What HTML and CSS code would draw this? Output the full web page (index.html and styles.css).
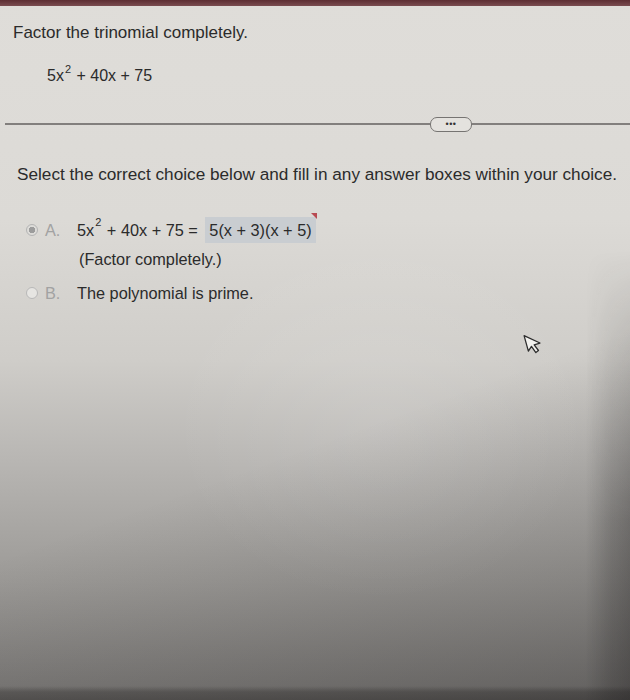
FILE: index.html
```
<!DOCTYPE html>
<html>
<head>
<meta charset="utf-8">
<link rel="stylesheet" href="styles.css">
</head>
<body>
<div class="screen">
  <div class="topband"></div>
  <div class="question">
    <p class="prompt">Factor the trinomial completely.</p>
    <p class="expr">5x<sup>2</sup> + 40x + 75</p>
  </div>
  <div class="divider">
    <span class="line"></span>
    <span class="more">&bull;&bull;&bull;</span>
    <span class="line short"></span>
  </div>
  <p class="instr">Select the correct choice below and fill in any answer boxes within your choice.</p>
  <div class="choices">
    <div class="choice">
      <span class="radio checked"></span>
      <span class="letter">A.</span>
      <div class="body">
        <div class="eqrow">5x<sup>2</sup> + 40x + 75 = <span class="answer">5(x + 3)(x + 5)<span class="flag"></span></span></div>
        <div class="note">(Factor completely.)</div>
      </div>
    </div>
    <div class="choice b">
      <span class="radio"></span>
      <span class="letter">B.</span>
      <div class="body">The polynomial is prime.</div>
    </div>
  </div>
  <svg class="cursor" width="18" height="22" viewBox="0 0 18 22">
    <path d="M2 1 L3 17 L7 13 L10 20 L13 18.5 L10 12 L16 11.5 Z" fill="#f2f1ee" stroke="#2a2a2a" stroke-width="1.3" stroke-linejoin="round"/>
  </svg>
</div>
</body>
</html>
```
FILE: styles.css
```
html, body {
  margin: 0;
  padding: 0;
}
body {
  width: 630px;
  height: 700px;
  overflow: hidden;
  font-family: "Liberation Sans", Arial, sans-serif;
  color: #2b2b2b;
}
.screen {
  position: relative;
  width: 630px;
  height: 700px;
  background:
    linear-gradient(to bottom, rgba(0,0,0,0) 0px, rgba(0,0,0,0) 686px, rgba(40,38,37,0.35) 692px, rgba(40,38,37,0.45) 700px),
    linear-gradient(to bottom, #dfddd9 0px, #dcdad6 220px, #cfcdc9 360px, #b8b6b3 460px, #9c9a97 580px, #7e7c7a 690px);
  overflow: hidden;
}
.screen::before {
  content: "";
  position: absolute;
  inset: 0;
  background: linear-gradient(to right, rgba(0,0,0,0) 0%, rgba(0,0,0,0) 93%, rgba(30,28,28,0.22) 97%, rgba(30,28,28,0.32) 100%);
  -webkit-mask-image: linear-gradient(to bottom, transparent 0px, transparent 250px, #000 520px);
  mask-image: linear-gradient(to bottom, transparent 0px, transparent 250px, #000 520px);
  pointer-events: none;
}
.screen::after {
  content: "";
  position: absolute;
  inset: 0;
  background: radial-gradient(ellipse 300px 260px at 380px 420px, rgba(255,255,255,0.10), rgba(255,255,255,0) 70%),
              linear-gradient(160deg, rgba(0,0,0,0) 60%, rgba(20,18,18,0.25) 100%);
  pointer-events: none;
}
.topband {
  height: 6px;
  background: linear-gradient(to bottom, #5d2e33, #7a4c50);
}
.question {
  padding: 15px 0 0 13px;
}
.prompt {
  margin: 0;
  font-size: 17px;
  line-height: 24px;
}
.expr {
  margin: 20px 0 0 34px;
  font-size: 16px;
  line-height: 22px;
}
sup {
  font-size: 11px;
  vertical-align: 0;
  position: relative;
  top: -8px;
  margin-left: 1px;
  margin-right: 1px;
}
.divider {
  display: flex;
  align-items: center;
  margin: 28px 0 0 5px;
  height: 16px;
}
.line {
  flex: 0 0 425px;
  height: 1.5px;
  background: #827f7d;
}
.line.short {
  flex: 1 1 auto;
}
.more {
  width: 40px;
  height: 13px;
  border: 1.5px solid #767472;
  border-radius: 7px;
  font-size: 9px;
  line-height: 13px;
  text-align: center;
  letter-spacing: 0.5px;
  color: #333;
  background: #e4e2de;
}
.instr {
  margin: 30px 0 0 17px;
  font-size: 17.2px;
  line-height: 24px;
}
.choices {
  margin: 33px 0 0 26px;
}
.choice {
  display: flex;
  align-items: flex-start;
  font-size: 16.3px;
  line-height: 22px;
}
.choice.b {
  margin-top: 12px;
}
.radio {
  width: 12px;
  height: 12px;
  border: 1.5px solid #b8b8b8;
  border-radius: 50%;
  margin-top: 5px;
  box-sizing: border-box;
  flex: 0 0 auto;
  background: #e6e5e2;
}
.radio.checked {
  border-color: #b4b4b4;
  background: radial-gradient(circle, #9c9c9c 0 3px, #dddcd9 3.5px);
}
.letter {
  color: #a2a2a2;
  margin-left: 7px;
  width: 32px;
  flex: 0 0 auto;
}
.eqrow {
  display: flex;
  align-items: center;
  white-space: pre;
  height: 22px;
}
.answer {
  position: relative;
  background: #c9cdd1;
  padding: 1px 4px 1px 4px;
  margin-left: 3px;
  height: 24px;
  line-height: 24px;
}
.flag {
  position: absolute;
  top: -4px;
  right: -1px;
  width: 0;
  height: 0;
  border-top: 6px solid #b84a52;
  border-left: 6px solid transparent;
}
.note {
  margin-top: 7px;
  margin-left: 2px;
}
.cursor {
  position: absolute;
  left: 524px;
  top: 333px;
  transform: rotate(-12deg);
}
```
